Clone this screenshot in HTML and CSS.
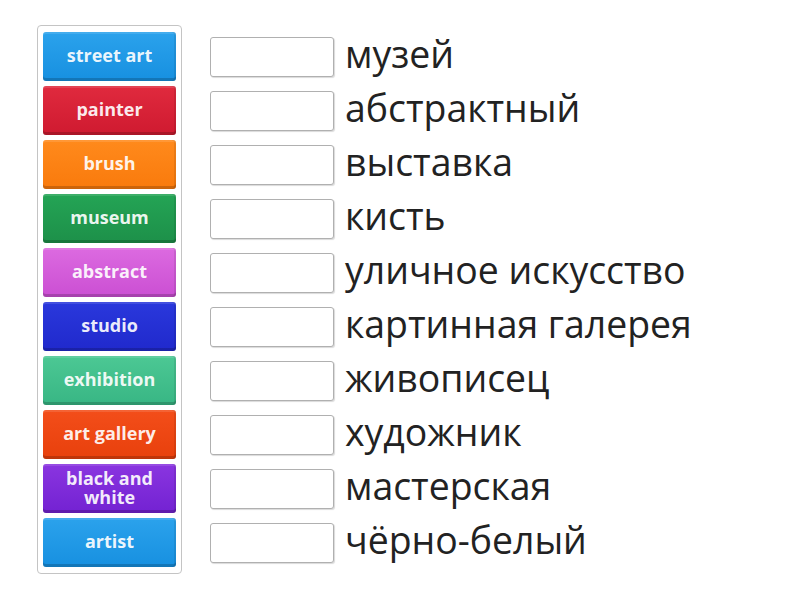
FILE: index.html
```html
<!DOCTYPE html>
<html>
<head>
<meta charset="utf-8">
<link rel="stylesheet" href="styles.css">
</head>
<body>
<div class="page">
  <div class="tiles">
    <div class="tile c1">street art</div>
    <div class="tile c2">painter</div>
    <div class="tile c3">brush</div>
    <div class="tile c4">museum</div>
    <div class="tile c5">abstract</div>
    <div class="tile c6">studio</div>
    <div class="tile c7">exhibition</div>
    <div class="tile c8">art gallery</div>
    <div class="tile c9">black and white</div>
    <div class="tile c10">artist</div>
  </div>
  <div class="rows">
    <div class="row"><div class="slot"></div><span class="word">музей</span></div>
    <div class="row"><div class="slot"></div><span class="word">абстрактный</span></div>
    <div class="row"><div class="slot"></div><span class="word">выставка</span></div>
    <div class="row"><div class="slot"></div><span class="word">кисть</span></div>
    <div class="row"><div class="slot"></div><span class="word">уличное искусство</span></div>
    <div class="row"><div class="slot"></div><span class="word">картинная галерея</span></div>
    <div class="row"><div class="slot"></div><span class="word">живописец</span></div>
    <div class="row"><div class="slot"></div><span class="word">художник</span></div>
    <div class="row"><div class="slot"></div><span class="word">мастерская</span></div>
    <div class="row"><div class="slot"></div><span class="word">чёрно-белый</span></div>
  </div>
</div>
</body>
</html>
```

FILE: styles.css
```css
html, body {
  margin: 0;
  padding: 0;
  background: #fff;
}
body {
  font-family: "Open Sans", "Noto Sans", sans-serif;
}
.page {
  display: flex;
  align-items: flex-start;
  padding: 25px 0 0 37px;
}
.tiles {
  display: flex;
  flex-direction: column;
  gap: 5px;
  padding: 6px 5px;
  border: 1px solid #c4c4c4;
  border-radius: 4px;
}
.tile {
  width: 133px;
  height: 49px;
  box-sizing: border-box;
  display: flex;
  align-items: center;
  justify-content: center;
  text-align: center;
  font-weight: 700;
  font-size: 18px;
  line-height: 19px;
  color: rgba(255,255,255,0.92);
  border-radius: 3px;
  padding: 0 10px 2px;
  box-shadow: inset 0 -3px 0 rgba(0,0,0,0.18), inset -2px 0 0 rgba(0,0,0,0.08), inset 0 2px 0 rgba(255,255,255,0.12);
}
.c1, .c10 { background: linear-gradient(#2ba2ec, #1790e0); }
.c2 { background: linear-gradient(#e02a3e, #cf1a30); }
.c3 { background: linear-gradient(#ff8a1c, #f97a0c); }
.c4 { background: linear-gradient(#24a455, #1d9049); }
.c5 { background: linear-gradient(#dc6ae0, #cb4fd3); }
.c6 { background: linear-gradient(#2a38dc, #2029cc); }
.c7 { background: linear-gradient(#4cc894, #38b684); }
.c8 { background: linear-gradient(#f34e1a, #e8400c); }
.c9 { background: linear-gradient(#8a35e0, #7322d2); }
.rows {
  display: flex;
  flex-direction: column;
  margin: 5px 0 0 28px;
}
.row {
  height: 54px;
  display: flex;
  align-items: center;
}
.slot {
  width: 124px;
  height: 40px;
  box-sizing: border-box;
  border: 1px solid #b0b0b0;
  border-radius: 3px;
  background: #fff;
  box-shadow: 1px 1px 1px rgba(0,0,0,0.15);
}
.word {
  margin-left: 11px;
  font-size: 37.4px;
  line-height: 44px;
  color: #222;
  padding-bottom: 7px;
}
```
